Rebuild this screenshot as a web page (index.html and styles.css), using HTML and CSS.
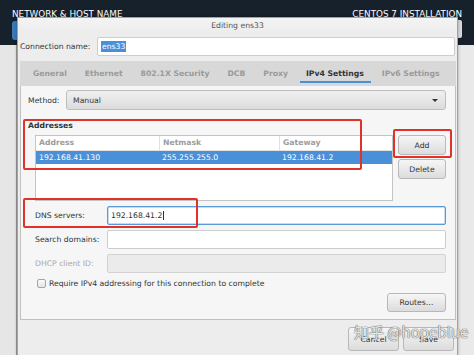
FILE: index.html
```html
<!DOCTYPE html>
<html lang="en">
<head>
  <meta charset="UTF-8">
  <meta name="viewport" content="width=device-width, initial-scale=1.0">
  <title>Editing ens33</title>
  <link rel="stylesheet" href="styles.css">
</head>
<body>
  <div class="topbar">
    <div class="topbar-left">
      <div class="spoke-title">NETWORK &amp; HOST NAME</div>
      <div class="done-button"></div>
    </div>
    <div class="topbar-right">
      <div class="spoke-title">CENTOS 7 INSTALLATION</div>
      <div class="keyboard-button"></div>
    </div>
  </div>
  <div class="spoke-body"></div>

  <div class="dialog">
    <div class="dialog-title">Editing ens33</div>
    <div class="name-row">
      <span class="label name-label">Connection name:</span>
      <div class="entry"><span class="selected">ens33</span></div>
    </div>

    <div class="notebook">
      <div class="tabs">
        <span class="tab">General</span>
        <span class="tab">Ethernet</span>
        <span class="tab">802.1X Security</span>
        <span class="tab">DCB</span>
        <span class="tab">Proxy</span>
        <span class="tab active">IPv4 Settings</span>
        <span class="tab">IPv6 Settings</span>
      </div>
      <div class="page">
        <div class="method-row">
          <span class="label method-label">Method:</span>
          <div class="combo">Manual<span class="arrow"></span></div>
        </div>

        <div class="section-label">Addresses</div>
        <div class="addresses">
          <div class="table">
            <div class="table-head">
              <span>Address</span>
              <span>Netmask</span>
              <span>Gateway</span>
            </div>
            <div class="table-row selected-row">
              <span>192.168.41.130</span>
              <span>255.255.255.0</span>
              <span>192.168.41.2</span>
            </div>
          </div>
          <div class="side-buttons">
            <button class="button">Add</button>
            <button class="button">Delete</button>
          </div>
        </div>

        <div class="form">
          <span class="label">DNS servers:</span>
          <div class="entry focused"><span class="caret">192.168.41.2</span></div>
          <span class="label">Search domains:</span>
          <div class="entry"></div>
          <span class="label disabled">DHCP client ID:</span>
          <div class="entry disabled-entry"></div>
        </div>

        <div class="check-row">
          <span class="checkbox"></span>
          <span>Require IPv4 addressing for this connection to complete</span>
        </div>

        <div class="routes-row">
          <button class="button routes">Routes…</button>
        </div>

        <div class="mark mark-addresses"></div>
        <div class="mark mark-add"></div>
        <div class="mark mark-dns"></div>
      </div>
    </div>

    <div class="actions">
      <button class="button action">Cancel</button>
      <button class="button action">Save</button>
    </div>
  </div>

  <div class="watermark">知乎 @hopeblue</div>
</body>
</html>
```

FILE: styles.css
```css
html, body {
  margin: 0;
  padding: 0;
}
body {
  width: 474px;
  height: 355px;
  overflow: hidden;
  position: relative;
  background-color: #e6e6e6;
  font-family: "DejaVu Sans", sans-serif;
  font-size: 7.7px;
  color: #2e3436;
}
.topbar {
  height: 45px;
  background-color: #17212b;
  display: flex;
  justify-content: space-between;
  padding: 0 12px;
}
.topbar-left, .topbar-right {
  display: flex;
  flex-direction: column;
}
.topbar-right {
  align-items: flex-end;
}
.spoke-title {
  color: #fff;
  font-size: 8.8px;
  line-height: 10px;
  margin-top: 9px;
}
.done-button {
  width: 60px;
  height: 19px;
  margin-top: 2px;
  background-color: #3b78b8;
  border-radius: 3px;
}
.keyboard-button {
  width: 62px;
  height: 18px;
  margin-top: 1px;
  background-color: #d9d9d9;
  border-radius: 2px;
}
.spoke-body {
  height: 310px;
  margin-left: 16px;
  border-left: 1px solid #9a9a9a;
  background-color: #e9e9e9;
}

/* modal dialog over the spoke */
.dialog {
  position: absolute;
  left: 17px;
  top: 17px;
  width: 441px;
  height: 345px;
  box-sizing: border-box;
  border: 1px solid #a3a3a3;
  background-color: #ededed;
  box-shadow: 0 0 3px rgba(0, 0, 0, 0.3);
}
.dialog-title {
  height: 15px;
  line-height: 15px;
  text-align: center;
  color: #555;
  background: linear-gradient(#f4f4f4, #ececec);
}
.name-row {
  display: flex;
  align-items: center;
  height: 19px;
  margin: 4px 2px 0 2px;
}
.name-label {
  width: 77px;
}
.entry {
  flex: 1;
  height: 19px;
  box-sizing: border-box;
  background-color: #fff;
  border: 1px solid #cdcdcd;
  border-radius: 2px;
  display: flex;
  align-items: center;
  padding-left: 3px;
}
.selected {
  background-color: #4a90d9;
  color: #fff;
  padding: 1px 1px;
}

.notebook {
  margin: 5px 1px 0 2px;
}
.tabs {
  height: 25px;
  display: flex;
  padding-left: 4px;
  background-color: #d8d8d8;
}
.tab {
  position: relative;
  line-height: 25px;
  padding: 0 9px;
  font-weight: bold;
  color: #9a9a9a;
}
.tab.active {
  color: #2e3436;
}
.tab.active::after {
  content: "";
  position: absolute;
  left: 3px;
  right: 2px;
  bottom: 3px;
  height: 2px;
  background-color: #4a90d9;
}
.page {
  position: relative;
  height: 234px;
  box-sizing: border-box;
  border: 1px solid #c0c0c0;
  border-top: none;
  background-color: #f6f6f6;
  padding: 4px 9px 0 7px;
}
.method-row {
  display: flex;
  align-items: center;
  height: 20px;
}
.method-label {
  width: 38px;
}
.combo {
  flex: 1;
  height: 20px;
  box-sizing: border-box;
  border: 1px solid #bdbdbd;
  border-radius: 3px;
  background: linear-gradient(#f0f0f0, #dcdcdc);
  display: flex;
  align-items: center;
  justify-content: space-between;
  padding: 0 7px 0 6px;
}
.arrow {
  width: 0;
  height: 0;
  border-left: 3px solid transparent;
  border-right: 3px solid transparent;
  border-top: 3px solid #333;
}
.section-label {
  margin-top: 10px;
  line-height: 12px;
  font-weight: bold;
}
.addresses {
  display: flex;
  margin-top: 3px;
  padding-left: 7px;
}
.table {
  width: 358px;
  height: 66px;
  box-sizing: border-box;
  border: 1px solid #c4c4c4;
  background-color: #fff;
}
.table-head, .table-row {
  display: grid;
  grid-template-columns: 123px 120px 1fr;
}
.table-head {
  height: 14px;
  line-height: 14px;
  font-weight: bold;
  color: #9c9c9c;
  border-bottom: 1px solid #e2e2e2;
}
.table-head span + span {
  border-left: 1px solid #e0e0e0;
}
.table-head span, .table-row span {
  padding-left: 3px;
}
.table-row {
  height: 13px;
  line-height: 13px;
}
.selected-row {
  background-color: #4a90d9;
  color: #fff;
}
.side-buttons {
  display: flex;
  flex-direction: column;
  gap: 4px;
  width: 48px;
  margin-left: 5px;
}
.button {
  box-sizing: border-box;
  height: 20px;
  padding: 0;
  border: 1px solid #b8b8b8;
  border-radius: 3px;
  background: linear-gradient(#f6f6f6, #dcdcdc);
  font-family: "DejaVu Sans", sans-serif;
  font-size: 7.7px;
  color: #2e3436;
}
.form {
  display: grid;
  grid-template-columns: 72px 1fr;
  grid-auto-rows: 19px;
  row-gap: 5px;
  align-items: center;
  margin-top: 5px;
  padding-left: 7px;
}
.label.disabled {
  color: #a8a8a8;
}
.entry.focused {
  border: 1px solid #5b9ad8;
  box-shadow: inset 0 0 0 0.5px #8cb8e4;
}
.caret {
  border-right: 1px solid #2e3436;
  padding-right: 1px;
}
.disabled-entry {
  background-color: #ebebeb;
  border-color: #d2d2d2;
}
.check-row {
  display: flex;
  align-items: center;
  height: 9px;
  margin-top: 6px;
  padding-left: 9px;
}
.checkbox {
  width: 9px;
  height: 9px;
  box-sizing: border-box;
  border: 1px solid #a6a6a6;
  border-radius: 2px;
  background: linear-gradient(#fafafa, #e4e4e4);
  margin-right: 3px;
}
.routes-row {
  display: flex;
  justify-content: flex-end;
  margin-top: 5px;
}
.routes {
  width: 59px;
  height: 19px;
}
.mark {
  position: absolute;
  box-sizing: border-box;
  border: 2px solid #e03229;
  border-radius: 2px;
}
.mark-addresses {
  left: 2px;
  top: 33px;
  width: 339px;
  height: 51px;
}
.mark-add {
  left: 372px;
  top: 43px;
  width: 59px;
  height: 29px;
}
.mark-dns {
  left: 2px;
  top: 112px;
  width: 175px;
  height: 30px;
}
.actions {
  display: flex;
  justify-content: flex-end;
  gap: 4px;
  margin-top: 7px;
  padding-right: 3px;
}
.action {
  width: 51px;
  height: 24px;
}
.watermark {
  position: absolute;
  left: 354px;
  top: 323px;
  font-family: "Noto Sans CJK SC", "DejaVu Sans", sans-serif;
  font-size: 15px;
  line-height: 18px;
  color: rgba(255, 255, 255, 0.85);
  text-shadow: 0 0 1px #555, 0 0 1px #555;
}
```
